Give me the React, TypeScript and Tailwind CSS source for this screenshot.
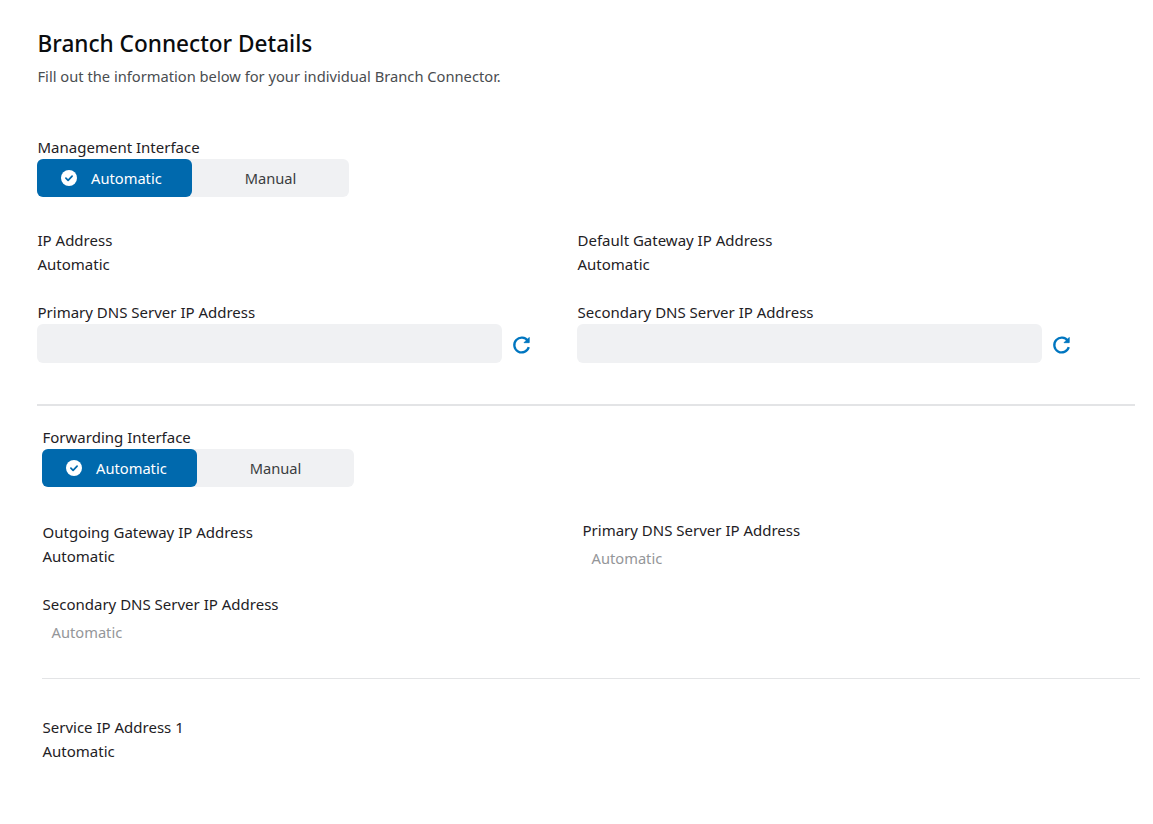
import React from 'react';

const Toggle = () => (
    <div className="flex w-[312px] h-[38px] rounded-[6px] bg-[#f0f1f3] text-[14.7px]">
        <div className="w-[155px] rounded-[6px] bg-[#0069ad] text-white flex items-center pl-[24px] gap-[14px]">
            <svg width="16" height="16" viewBox="0 0 16 16">
                <circle cx="8" cy="8" r="8" fill="#fff" />
                <path d="M4.9 8.2l2.2 2.2l4-4.2" fill="none" stroke="#0069ad" strokeWidth="1.7" strokeLinecap="round" strokeLinejoin="round" />
            </svg>
            <span>Automatic</span>
        </div>
        <div className="flex-1 flex items-center justify-center text-[#3a3d40]">Manual</div>
    </div>
);

const ReadOnly = ({ label, value = 'Automatic' }: { label: string; value?: string }) => (
    <div className="leading-[22px] pl-[0.5px]">
        <div className="mb-[2px]">{label}</div>
        <div className="mb-[2px]">{value}</div>
    </div>
);

const Muted = ({ label }: { label: string }) => (
    <div className="pl-[0.5px]">
        <div className="leading-[22px]">{label}</div>
        <div className="leading-[22px] mt-[6px] pl-[9px] text-[14.7px] text-[#949699]">Automatic</div>
    </div>
);

const DnsInput = ({ label }: { label: string }) => (
    <div>
        <div className="leading-[22px] mb-px pl-[0.5px]">{label}</div>
        <div className="flex items-center">
            <div className="w-[465px] h-[39px] rounded-[6px] bg-[#f0f1f3]" />
            <svg className="ml-[10px] mt-[4px]" width="19" height="19" viewBox="0 0 18 18" fill="none" stroke="#0076c0" strokeWidth="2.2" strokeLinejoin="miter">
                <path d="M15 4.6A7 7 0 1 0 15.9 10.5" />
                <path d="M16.3 1.4v4.9h-4.9z" fill="#0076c0" strokeWidth="0.8" />
            </svg>
        </div>
    </div>
);

export default function App() {
    return (
        <div className="min-h-[824px] bg-white text-[15px] text-[#1e2125] pt-[29px] pl-[37px] pr-[18px] font-['Noto_Sans',sans-serif]">
            <h1 className="pl-[0.5px] text-[22.6px] leading-[30px] font-medium text-[#0a0c0e]">Branch Connector Details</h1>
            <p className="pl-[0.5px] mt-[6px] text-[14.7px] leading-[22px] text-[#4a4d50]">Fill out the information below for your individual Branch Connector.</p>

            {/* Management */}
            <div className="mt-[49px]">
                <div className="leading-[22px] mb-px pl-[0.5px]">Management Interface</div>
                <Toggle />
            </div>
            <div className="mt-[32px] grid grid-cols-[540px_1fr] gap-y-[24px]">
                <ReadOnly label="IP Address" />
                <ReadOnly label="Default Gateway IP Address" />
                <DnsInput label="Primary DNS Server IP Address" />
                <DnsInput label="Secondary DNS Server IP Address" />
            </div>
            <div className="mt-[41px] h-[2px] bg-[#e3e4e6]" />

            {/* Forwarding */}
            <div className="ml-[5px] -mr-[5px]">
                <div className="mt-[20px] leading-[22px] mb-px pl-[0.5px]">Forwarding Interface</div>
                <Toggle />
                <div className="mt-[34px] grid grid-cols-[540px_1fr]">
                    <ReadOnly label="Outgoing Gateway IP Address" />
                    <div className="-mt-[2px]">
                        <Muted label="Primary DNS Server IP Address" />
                    </div>
                </div>
                <div className="mt-[24px]">
                    <Muted label="Secondary DNS Server IP Address" />
                </div>
                <div className="mt-[35px] h-px bg-[#e3e4e6]" />
                <div className="mt-[37px]">
                    <ReadOnly label="Service IP Address 1" />
                </div>
            </div>
        </div>
    );
}
